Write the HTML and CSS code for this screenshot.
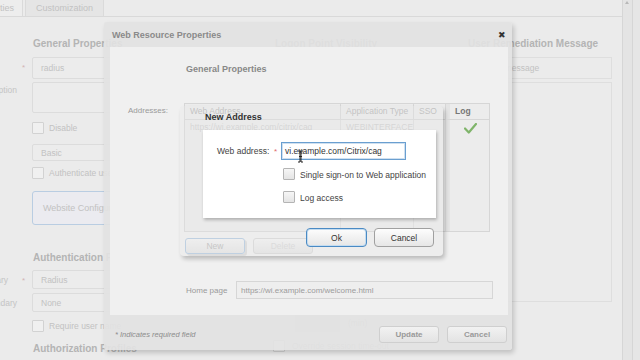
FILE: index.html
```html
<!DOCTYPE html>
<html>
<head>
    <title>Web Resource Properties</title>
    <link rel="stylesheet" href="styles.css">
</head>
<body>
    <div class="page">
        <div class="main">
            <div class="tabs">
                <div class="tab tab-active">ties</div>
                <div class="tab">Customization</div>
            </div>
            <div class="cols">
                <div class="col col-general">
                    <h3 class="bg-heading">General Properties</h3>
                    <div class="frow frow-input">
                        <span class="flabel"></span><span class="star">*</span>
                        <div class="field">radius</div>
                    </div>
                    <div class="frow frow-area">
                        <span class="flabel">Description</span><span class="star"></span>
                        <div class="field"></div>
                    </div>
                    <div class="frow frow-check">
                        <span class="flabel"></span><span class="star"></span>
                        <div class="check-line"><span class="box"></span>Disable</div>
                    </div>
                    <div class="frow frow-select">
                        <span class="flabel"></span><span class="star"></span>
                        <div class="field">Basic</div>
                    </div>
                    <div class="frow frow-check2">
                        <span class="flabel"></span><span class="star"></span>
                        <div class="check-line"><span class="box"></span>Authenticate users</div>
                    </div>
                    <div class="frow frow-button">
                        <span class="flabel"></span><span class="star"></span>
                        <div class="config-btn">Website Configuration</div>
                    </div>
                    <h3 class="bg-heading heading-auth">Authentication Profiles</h3>
                    <div class="frow frow-primary">
                        <span class="flabel label-primary">Primary</span><span class="star">*</span>
                        <div class="field">Radius</div>
                    </div>
                    <div class="frow frow-secondary">
                        <span class="flabel">Secondary</span><span class="star"></span>
                        <div class="field">None</div>
                    </div>
                    <div class="frow frow-check3">
                        <span class="flabel"></span><span class="star"></span>
                        <div class="check-line"><span class="box"></span>Require user name</div>
                    </div>
                    <h3 class="bg-heading heading-authz">Authorization Profiles</h3>
                </div>

                <div class="col col-logon">
                    <h3 class="bg-heading">Logon Point Visibility</h3>
                    <div class="timeout-row">
                        <div class="timeout-box"></div>
                        <span>(min)</span>
                    </div>
                    <div class="check-line override"><span class="box"></span>Override session time-out</div>
                </div>

                <div class="col col-remed">
                    <h3 class="bg-heading">User Remediation Message</h3>
                    <div class="remed-input">Enter a message</div>
                    <div class="remed-area"></div>
                </div>
            </div>
        </div>
        <div class="scrollbar"><span class="arrow"></span></div>
        <div class="page-edge"></div>
    </div>

    <div class="web-dialog">
        <div class="wd-header">
            <span class="wd-title">Web Resource Properties</span>
            <span class="wd-close">&#10006;</span>
        </div>
        <div class="wd-panel">
            <h4 class="wd-heading">General Properties</h4>
            <div class="addr-row">
                <span class="wd-label">Addresses:</span>
                <div class="addr-table">
                    <div class="th">Web Address</div>
                    <div class="th">Application Type</div>
                    <div class="th">SSO</div>
                    <div class="th th-log">Log</div>
                    <div class="td">https://wi.example.com/citrix/cag</div>
                    <div class="td">WEBINTERFACE</div>
                    <div class="td"></div>
                    <div class="td td-log">
                        <svg width="13" height="11" viewBox="0 0 13 11"><path d="M1 5.5 L4.8 9.5 L12 1" fill="none" stroke="#7fb46a" stroke-width="2.2" stroke-linecap="round" stroke-linejoin="round"/></svg>
                    </div>
                    <div class="tf"></div><div class="tf"></div><div class="tf"></div><div class="tf"></div>
                </div>
            </div>
            <div class="addr-buttons">
                <div class="btn btn-new">New</div>
                <div class="btn btn-delete">Delete</div>
            </div>
            <div class="home-row">
                <span class="wd-label">Home page</span>
                <div class="home-input">https://wi.example.com/welcome.html</div>
            </div>
        </div>
        <div class="wd-footer">
            <span class="required-note">* Indicates required field</span>
            <div class="btn btn-foot">Update</div>
            <div class="btn btn-foot">Cancel</div>
        </div>
    </div>

    <div class="new-dialog">
        <div class="nd-title">New Address</div>
        <div class="nd-body">
            <span class="nd-label">Web address:</span>
            <span class="nd-star">*</span>
            <div class="nd-input">vi.example.com/Citrix/cag</div>
            <span></span><span></span>
            <div class="nd-check"><span class="box"></span>Single sign-on to Web application</div>
            <span></span><span></span>
            <div class="nd-check"><span class="box"></span>Log access</div>
            <svg class="ibeam" width="7" height="13" viewBox="0 0 7 13"><path d="M1 1 H3 V12 H1 M6 1 H4 V12 H6 M2 6.5 H5" fill="none" stroke="#222" stroke-width="1"/></svg>
        </div>
        <div class="nd-buttons">
            <div class="nd-btn nd-ok">Ok</div>
            <div class="nd-btn">Cancel</div>
        </div>
    </div>
</body>
</html>
```

FILE: styles.css
```css
body {
    margin: 0;
    width: 640px;
    height: 360px;
    overflow: hidden;
    position: relative;
    background: #ebebeb;
    font-family: "Liberation Sans", Arial, sans-serif;
    font-size: 8.5px;
    color: #c2c2c2;
}
.page {
    display: flex;
    height: 360px;
}
.main {
    width: 622px;
}
.scrollbar {
    width: 9px;
    background: #e4e4e4;
    border-left: 1px solid #d6d6d6;
    border-right: 1px solid #d6d6d6;
    position: relative;
}
.scrollbar .arrow {
    position: absolute;
    left: 2px;
    top: 1px;
    border-left: 2.5px solid transparent;
    border-right: 2.5px solid transparent;
    border-bottom: 3px solid #b8b8b8;
}
.page-edge {
    flex: 1;
    background: #e6e6e6;
}
.tabs {
    display: flex;
    height: 16px;
    border-bottom: 1px solid #d9d9d9;
}
.tab {
    line-height: 16px;
    padding: 0 10px;
    font-size: 9px;
    border-right: 1px solid #dadada;
    border-left: 1px solid #dadada;
    background: #e5e5e5;
}
.tab-active {
    padding: 0 8px 0 0;
    border-left: none;
    background: #ededed;
    margin-right: 2px;
}
.cols {
    display: grid;
    grid-template-columns: 273px 195px 1fr;
}
.col {
    display: flex;
    flex-direction: column;
}
.bg-heading {
    margin: 20px 0 0;
    font-size: 10px;
    line-height: 14px;
    font-weight: bold;
    color: #b4b4b4;
    white-space: nowrap;
}
.col-general .bg-heading {
    padding-left: 33px;
}
.col-logon .bg-heading {
    padding-left: 2px;
}
.frow {
    display: grid;
    grid-template-columns: 22px 10px 236px;
}
.flabel {
    display: flex;
    justify-content: flex-end;
    white-space: nowrap;
    padding-right: 5px;
    color: #c4c4c4;
}
.label-primary {
    padding-right: 14px;
}
.star {
    color: #d2b4b4;
    font-size: 8px;
    padding-top: 6px;
}
.field {
    border: 1px solid #dcdcdc;
    border-radius: 2px;
    background: #ececec;
    padding-left: 8px;
    box-sizing: border-box;
    display: flex;
    align-items: center;
}
.frow-input {
    margin-top: 6px;
    height: 22px;
}
.frow-area {
    margin-top: 3px;
    height: 31px;
}
.frow-area .flabel {
    padding-top: 3px;
}
.frow-check {
    margin-top: 9px;
}
.frow-select {
    margin-top: 10px;
    height: 17px;
}
.frow-check2 {
    margin-top: 6px;
}
.frow-button {
    margin-top: 12px;
    height: 34px;
}
.frow-primary {
    margin-top: 5px;
    height: 19px;
}
.frow-primary .flabel,
.frow-secondary .flabel {
    align-items: center;
}
.frow-secondary {
    margin-top: 4px;
    height: 19px;
}
.frow-check3 {
    margin-top: 8px;
}
.heading-auth {
    margin-top: 26px;
}
.heading-authz {
    margin-top: 10px;
}
.check-line {
    display: flex;
    align-items: center;
    gap: 5px;
    height: 12px;
    white-space: nowrap;
}
.box {
    width: 10px;
    height: 10px;
    border: 1px solid #d2d2d2;
    border-radius: 1px;
    background: #f0f0f0;
    flex-shrink: 0;
}
.config-btn {
    width: 110px;
    border: 1px solid #b9cde2;
    border-radius: 3px;
    background: #ebebf0;
    box-sizing: border-box;
    padding-left: 10px;
    display: flex;
    align-items: center;
    white-space: nowrap;
    font-size: 9px;
}
.timeout-row {
    margin-top: 262px;
    display: flex;
    align-items: center;
    gap: 8px;
    height: 19px;
    padding-left: 22px;
}
.timeout-box {
    width: 45px;
    height: 19px;
    background: #dedede;
}
.override {
    margin-top: 8px;
    gap: 7px;
}
.remed-input {
    margin-top: 6px;
    height: 22px;
    border: 1px solid #dedede;
    box-sizing: border-box;
    padding-left: 6px;
    display: flex;
    align-items: center;
    margin-right: 10px;
}
.remed-area {
    margin-top: 3px;
    height: 218px;
    border: 1px solid #dedede;
    margin-right: 10px;
}

/* Web Resource Properties dialog */
.web-dialog {
    position: absolute;
    left: 104px;
    top: 22px;
    width: 408px;
    height: 328px;
    background: rgba(226, 226, 226, 0.9);
    border-radius: 3px;
    box-shadow: 2px 3px 5px rgba(0, 0, 0, 0.18);
    display: flex;
    flex-direction: column;
}
.wd-header {
    height: 25px;
    display: flex;
    align-items: center;
    justify-content: space-between;
    padding: 0 6px 0 8px;
}
.wd-title {
    font-size: 9px;
    font-weight: bold;
    color: #8a8a8a;
}
.wd-close {
    font-size: 9px;
    color: #333;
}
.wd-panel {
    margin: 0 4px 0 6px;
    height: 268px;
    background: rgba(240, 240, 240, 0.95);
    display: flex;
    flex-direction: column;
}
.wd-heading {
    margin: 17px 0 0 76px;
    font-size: 9px;
    line-height: 11px;
    color: #888;
}
.wd-label {
    color: #9a9a9a;
    font-size: 8px;
}
.addr-row {
    margin-top: 28px;
    display: flex;
}
.addr-row .wd-label {
    width: 56px;
    padding-left: 18px;
    padding-top: 3px;
}
.addr-table {
    width: 306px;
    height: 129px;
    border: 1px solid #d6d6d6;
    box-sizing: border-box;
    display: grid;
    grid-template-columns: 156px 73px 32px 1fr;
    grid-template-rows: 16px 15px 1fr;
    background: #ececec;
}
.th {
    border-right: 1px solid #d6d6d6;
    border-bottom: 1px solid #d6d6d6;
    padding-left: 5px;
    line-height: 15px;
    font-size: 8.5px;
    color: #b0b0b0;
    white-space: nowrap;
}
.th-log {
    border-right: none;
    border-left: 4px solid #e4e4e4;
    font-weight: bold;
    color: #777;
}
.td {
    border-right: 1px solid #dcdcdc;
    padding-left: 5px;
    line-height: 14px;
    color: #cdcdcd;
    white-space: nowrap;
    overflow: hidden;
}
.td-log {
    border-right: none;
    border-left: 4px solid #e4e4e4;
    padding-left: 14px;
    padding-top: 3px;
}
.tf {
    border-right: 1px solid #dcdcdc;
}
.tf:last-child {
    border-right: none;
    border-left: 4px solid #e4e4e4;
}
.addr-buttons {
    margin: 6px 0 0 75px;
    display: flex;
    gap: 8px;
}
.btn {
    width: 60px;
    height: 16px;
    box-sizing: border-box;
    border: 1px solid #d4d4d4;
    border-radius: 3px;
    background: linear-gradient(#f2f2f2, #e3e3e3);
    display: flex;
    align-items: center;
    justify-content: center;
    color: #b4b4b4;
}
.btn-new {
    border-color: #a9c4de;
    box-shadow: 2px 2px 0 #d8d8d8;
}
.btn-delete {
    color: #d4d4d4;
}
.home-row {
    margin: 27px 0 0 76px;
    display: flex;
    align-items: center;
}
.home-row .wd-label {
    width: 50px;
}
.home-input {
    width: 257px;
    height: 18px;
    box-sizing: border-box;
    border: 1px solid #d6d6d6;
    background: #eeeeee;
    padding-left: 4px;
    display: flex;
    align-items: center;
    color: #9c9c9c;
    font-size: 8px;
}
.wd-footer {
    flex: 1;
    display: flex;
    align-items: center;
    padding: 3px 5px 0 11px;
    gap: 8px;
}
.required-note {
    font-style: italic;
    font-size: 7.5px;
    color: #8c8c8c;
    margin-right: auto;
}
.btn-foot {
    height: 17px;
    color: #999;
    font-weight: bold;
    font-size: 8px;
    border-color: #cfcfcf;
}

/* New Address dialog */
.new-dialog {
    position: absolute;
    left: 180px;
    top: 106px;
    width: 263px;
    height: 150px;
    border-radius: 4px;
    background: rgba(232, 232, 232, 0.35);
    box-shadow: 2px 3px 4px rgba(0, 0, 0, 0.22);
}
.nd-title {
    height: 24px;
    line-height: 22px;
    padding-left: 25px;
    font-size: 9px;
    font-weight: bold;
    color: #333;
}
.nd-body {
    position: relative;
    margin-left: 23px;
    width: 233px;
    height: 88px;
    box-sizing: border-box;
    background: #ffffff;
    box-shadow: 1px 2px 3px rgba(0, 0, 0, 0.25);
    padding: 12px 0 0 14px;
    display: grid;
    grid-template-columns: 57px 7px 125px;
    grid-template-rows: 18px 20px 23px;
    row-gap: 0;
    color: #444;
}
.nd-label {
    align-self: center;
    white-space: nowrap;
    font-size: 8.5px;
}
.nd-star {
    align-self: center;
    color: #e06a6a;
    font-size: 8px;
}
.nd-input {
    border: 1px solid #6a9fd0;
    box-shadow: inset 0 0 0 1px #cfe0f0;
    display: flex;
    align-items: center;
    padding-left: 3px;
    color: #333;
    font-size: 8.5px;
}
.nd-check {
    display: flex;
    align-items: flex-end;
    gap: 5px;
    padding-left: 2px;
    white-space: nowrap;
    font-size: 8.5px;
}
.nd-check .box {
    border-color: #b4b4b4;
    background: linear-gradient(#f6f6f6, #e4e4e4);
}
.ibeam {
    position: absolute;
    left: 94px;
    top: 20px;
}
.nd-buttons {
    display: flex;
    justify-content: flex-end;
    gap: 7px;
    margin: 10px 9px 0 0;
}
.nd-btn {
    width: 60px;
    height: 19px;
    box-sizing: border-box;
    border: 1px solid #a0a0a0;
    border-radius: 4px;
    background: linear-gradient(#fdfdfd, #e6e6e6);
    display: flex;
    align-items: center;
    justify-content: center;
    color: #333;
    font-size: 8.5px;
}
.nd-ok {
    width: 61px;
    border: 1px solid #4a8ac4;
    box-shadow: inset 0 0 0 1px #c4dcf0;
}
```
